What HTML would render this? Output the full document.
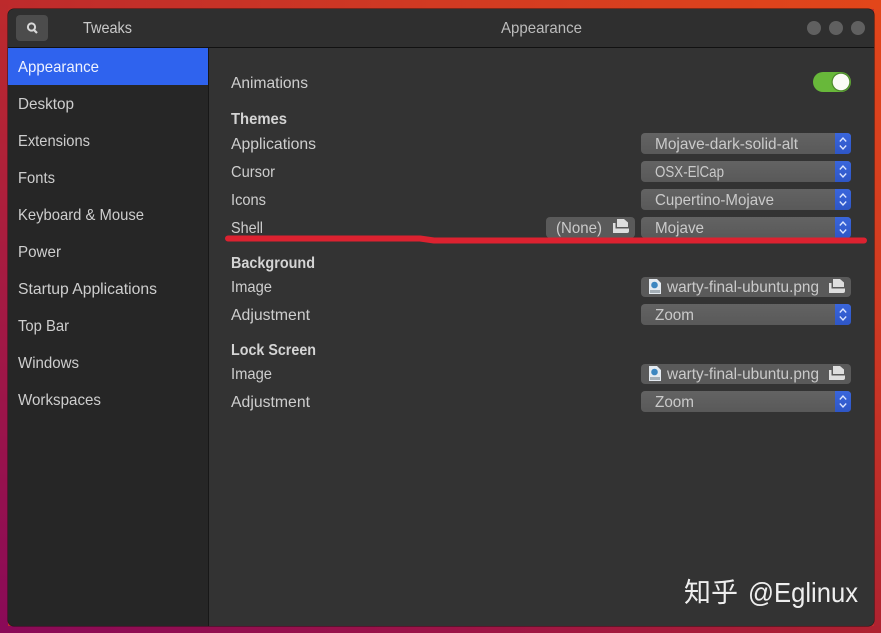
<!DOCTYPE html>
<html><head><meta charset="utf-8">
<style>
html,body{margin:0;padding:0;width:881px;height:633px;overflow:hidden;background:#000}
svg{display:block}
text{font-family:"Liberation Sans","Noto Sans CJK SC",sans-serif;font-size:16px;fill:#cecece}
.b{font-weight:bold;fill:#d4d4d4}
.c{fill:#cacaca}
</style></head><body>
<svg width="881" height="633" viewBox="0 0 881 633" xmlns="http://www.w3.org/2000/svg">
<defs>
<linearGradient id="bgL" x1="0" y1="0" x2="0" y2="1"><stop offset="0" stop-color="#bd2a2c"/><stop offset=".4" stop-color="#a81c40"/><stop offset="1" stop-color="#8a0a58"/></linearGradient>
<linearGradient id="bgR" x1="0" y1="0" x2="0" y2="1"><stop offset="0" stop-color="#e2461a"/><stop offset=".5" stop-color="#d03a22"/><stop offset="1" stop-color="#ae2230"/></linearGradient>
<linearGradient id="bgH" x1="0" y1="0" x2="1" y2="0"><stop offset="0" stop-color="#8a0a58"/><stop offset=".5" stop-color="#9c1448"/><stop offset="1" stop-color="#ae2230"/></linearGradient>
<linearGradient id="bgT" x1="0" y1="0" x2="1" y2="0"><stop offset="0" stop-color="#bd2a2c"/><stop offset=".5" stop-color="#d23a22"/><stop offset="1" stop-color="#e2461a"/></linearGradient>
<linearGradient id="combo" x1="0" y1="0" x2="0" y2="1"><stop offset="0" stop-color="#636363"/><stop offset="1" stop-color="#595959"/></linearGradient>
<linearGradient id="blue" x1="0" y1="0" x2="0" y2="1"><stop offset="0" stop-color="#3a66dc"/><stop offset="1" stop-color="#2e56c6"/></linearGradient>
<clipPath id="win"><rect x="8" y="9" width="866" height="617" rx="6"/></clipPath>
<g id="arrows"><path d="M-3.2 -2 L0 -5.5 L3.2 -2 M-3.2 2 L0 5.5 L3.2 2" fill="none" stroke="#dbe5ff" stroke-width="1.3"/></g>
<g id="folder"><path d="M4 8 V0 H11 L15 3.5 V8 Z" fill="#dedede"/><path d="M0 14 V4 H2.500 V9.500 H16 V12 Q16 14 14 14 Z" fill="#dedede"/></g>
<g id="png"><path d="M0 0 H8 L12 4 V15 H0 Z" fill="#e4eaf0"/><circle cx="5.500" cy="6" r="3.300" fill="#3c86c0"/><rect x="1" y="11" width="10" height="3" fill="#a4aeb6"/></g>
</defs>

<rect width="881" height="633" fill="#c02c2c"/>
<rect x="0" y="0" width="881" height="9" fill="url(#bgT)"/>
<rect x="874" y="0" width="7" height="633" fill="url(#bgR)"/>
<rect x="0" y="626" width="881" height="7" fill="url(#bgH)"/>
<rect x="0" y="0" width="8" height="633" fill="url(#bgL)"/>

<rect x="7.5" y="8.5" width="867" height="618" rx="6.5" fill="#1c1414"/>
<g clip-path="url(#win)">
<rect x="8" y="9" width="866" height="38" fill="#2f2f2f"/>
<rect x="8" y="47" width="866" height="1" fill="#111"/>
<rect x="8" y="48" width="200" height="578" fill="#262626"/>
<rect x="208" y="48" width="1" height="578" fill="#171717"/>
<rect x="209" y="48" width="665" height="578" fill="#333333"/>
<rect x="8" y="48" width="200" height="37" fill="#2f63ee"/>
</g>

<!-- header -->
<rect x="16" y="15" width="32" height="26" rx="4" fill="#4c4c4c"/>
<circle cx="31.5" cy="27" r="3.6" fill="none" stroke="#d8d8d8" stroke-width="2"/>
<path d="M34 30 L37 33" stroke="#d8d8d8" stroke-width="2.2"/>
<text x="83" y="33" textLength="49" lengthAdjust="spacingAndGlyphs" class="c">Tweaks</text>
<text x="501" y="33" textLength="81" lengthAdjust="spacingAndGlyphs" style="fill:#bcbcbc">Appearance</text>
<circle cx="814" cy="28" r="7" fill="#606060"/>
<circle cx="836" cy="28" r="7" fill="#606060"/>
<circle cx="858" cy="28" r="7" fill="#606060"/>

<!-- sidebar -->
<text x="18" y="72" textLength="81" lengthAdjust="spacingAndGlyphs" style="fill:#eef2ff">Appearance</text>
<text x="18" y="109" textLength="56" lengthAdjust="spacingAndGlyphs">Desktop</text>
<text x="18" y="146" textLength="72" lengthAdjust="spacingAndGlyphs">Extensions</text>
<text x="18" y="183" textLength="37" lengthAdjust="spacingAndGlyphs">Fonts</text>
<text x="18" y="220" textLength="126" lengthAdjust="spacingAndGlyphs">Keyboard &amp; Mouse</text>
<text x="18" y="257" textLength="43" lengthAdjust="spacingAndGlyphs">Power</text>
<text x="18" y="294" textLength="139" lengthAdjust="spacingAndGlyphs">Startup Applications</text>
<text x="18" y="331" textLength="51" lengthAdjust="spacingAndGlyphs">Top Bar</text>
<text x="18" y="368" textLength="61" lengthAdjust="spacingAndGlyphs">Windows</text>
<text x="18" y="405" textLength="83" lengthAdjust="spacingAndGlyphs">Workspaces</text>

<!-- labels -->
<text x="231" y="88" textLength="77" lengthAdjust="spacingAndGlyphs">Animations</text>
<text x="231" y="124" textLength="56" lengthAdjust="spacingAndGlyphs" class="b">Themes</text>
<text x="231" y="149" textLength="85" lengthAdjust="spacingAndGlyphs">Applications</text>
<text x="231" y="177" textLength="44" lengthAdjust="spacingAndGlyphs">Cursor</text>
<text x="231" y="205" textLength="35" lengthAdjust="spacingAndGlyphs">Icons</text>
<text x="231" y="233" textLength="32" lengthAdjust="spacingAndGlyphs">Shell</text>
<text x="231" y="268" textLength="84" lengthAdjust="spacingAndGlyphs" class="b">Background</text>
<text x="231" y="292" textLength="41" lengthAdjust="spacingAndGlyphs">Image</text>
<text x="231" y="320" textLength="79" lengthAdjust="spacingAndGlyphs">Adjustment</text>
<text x="231" y="355" textLength="85" lengthAdjust="spacingAndGlyphs" class="b">Lock Screen</text>
<text x="231" y="379" textLength="41" lengthAdjust="spacingAndGlyphs">Image</text>
<text x="231" y="407" textLength="79" lengthAdjust="spacingAndGlyphs">Adjustment</text>

<!-- switch -->
<rect x="813" y="72" width="38" height="20" rx="10" fill="#68b83a"/>
<circle cx="841" cy="82" r="9.5" fill="#4e8a2c"/>
<circle cx="841" cy="82" r="8.3" fill="#fbfbf6"/>

<!-- combos -->
<rect x="641" y="133" width="210" height="21" rx="4" fill="url(#combo)"/>
<path d="M835 133 H847 Q851 133 851 137 V150 Q851 154 847 154 H835 Z" fill="url(#blue)"/>
<use href="#arrows" x="843" y="143.500"/>
<text x="655" y="149" textLength="143" lengthAdjust="spacingAndGlyphs" class="c">Mojave-dark-solid-alt</text>

<rect x="641" y="161" width="210" height="21" rx="4" fill="url(#combo)"/>
<path d="M835 161 H847 Q851 161 851 165 V178 Q851 182 847 182 H835 Z" fill="url(#blue)"/>
<use href="#arrows" x="843" y="171.500"/>
<text x="655" y="177" textLength="69" lengthAdjust="spacingAndGlyphs" class="c">OSX-ElCap</text>

<rect x="641" y="189" width="210" height="21" rx="4" fill="url(#combo)"/>
<path d="M835 189 H847 Q851 189 851 193 V206 Q851 210 847 210 H835 Z" fill="url(#blue)"/>
<use href="#arrows" x="843" y="199.500"/>
<text x="655" y="205" textLength="119" lengthAdjust="spacingAndGlyphs" class="c">Cupertino-Mojave</text>

<rect x="641" y="217" width="210" height="21" rx="4" fill="url(#combo)"/>
<path d="M835 217 H847 Q851 217 851 221 V234 Q851 238 847 238 H835 Z" fill="url(#blue)"/>
<use href="#arrows" x="843" y="227.500"/>
<text x="655" y="233" textLength="49" lengthAdjust="spacingAndGlyphs" class="c">Mojave</text>

<rect x="546" y="217" width="89" height="21" rx="4" fill="#5a5a5a"/>
<text x="556" y="233" textLength="46" lengthAdjust="spacingAndGlyphs" class="c">(None)</text>
<use href="#folder" x="613" y="219"/>

<!-- background -->
<rect x="641" y="277" width="210" height="20" rx="4" fill="#5a5a5a"/>
<use href="#png" x="649" y="279"/>
<text x="667" y="292" textLength="152" lengthAdjust="spacingAndGlyphs" class="c">warty-final-ubuntu.png</text>
<use href="#folder" x="829" y="279"/>

<rect x="641" y="304" width="210" height="21" rx="4" fill="url(#combo)"/>
<path d="M835 304 H847 Q851 304 851 308 V321 Q851 325 847 325 H835 Z" fill="url(#blue)"/>
<use href="#arrows" x="843" y="314.500"/>
<text x="655" y="320" textLength="39" lengthAdjust="spacingAndGlyphs" class="c">Zoom</text>

<!-- lock screen -->
<rect x="641" y="364" width="210" height="20" rx="4" fill="#5a5a5a"/>
<use href="#png" x="649" y="366"/>
<text x="667" y="379" textLength="152" lengthAdjust="spacingAndGlyphs" class="c">warty-final-ubuntu.png</text>
<use href="#folder" x="829" y="366"/>

<rect x="641" y="391" width="210" height="21" rx="4" fill="url(#combo)"/>
<path d="M835 391 H847 Q851 391 851 395 V408 Q851 412 847 412 H835 Z" fill="url(#blue)"/>
<use href="#arrows" x="843" y="401.500"/>
<text x="655" y="407" textLength="39" lengthAdjust="spacingAndGlyphs" class="c">Zoom</text>

<!-- red annotation -->
<path d="M228 238.500 L420 238.500 L434 240.500 L864 240.500" fill="none" stroke="#dc2230" stroke-width="6" stroke-linecap="round" stroke-linejoin="round"/>

<!-- watermark -->
<text x="684" y="602" style="font-size:27px;fill:#eeeeee" textLength="54" lengthAdjust="spacingAndGlyphs">知乎</text>
<text x="748" y="602" style="font-size:28px;fill:#eeeeee" textLength="110" lengthAdjust="spacingAndGlyphs">@Eglinux</text>
</svg>
</body></html>
